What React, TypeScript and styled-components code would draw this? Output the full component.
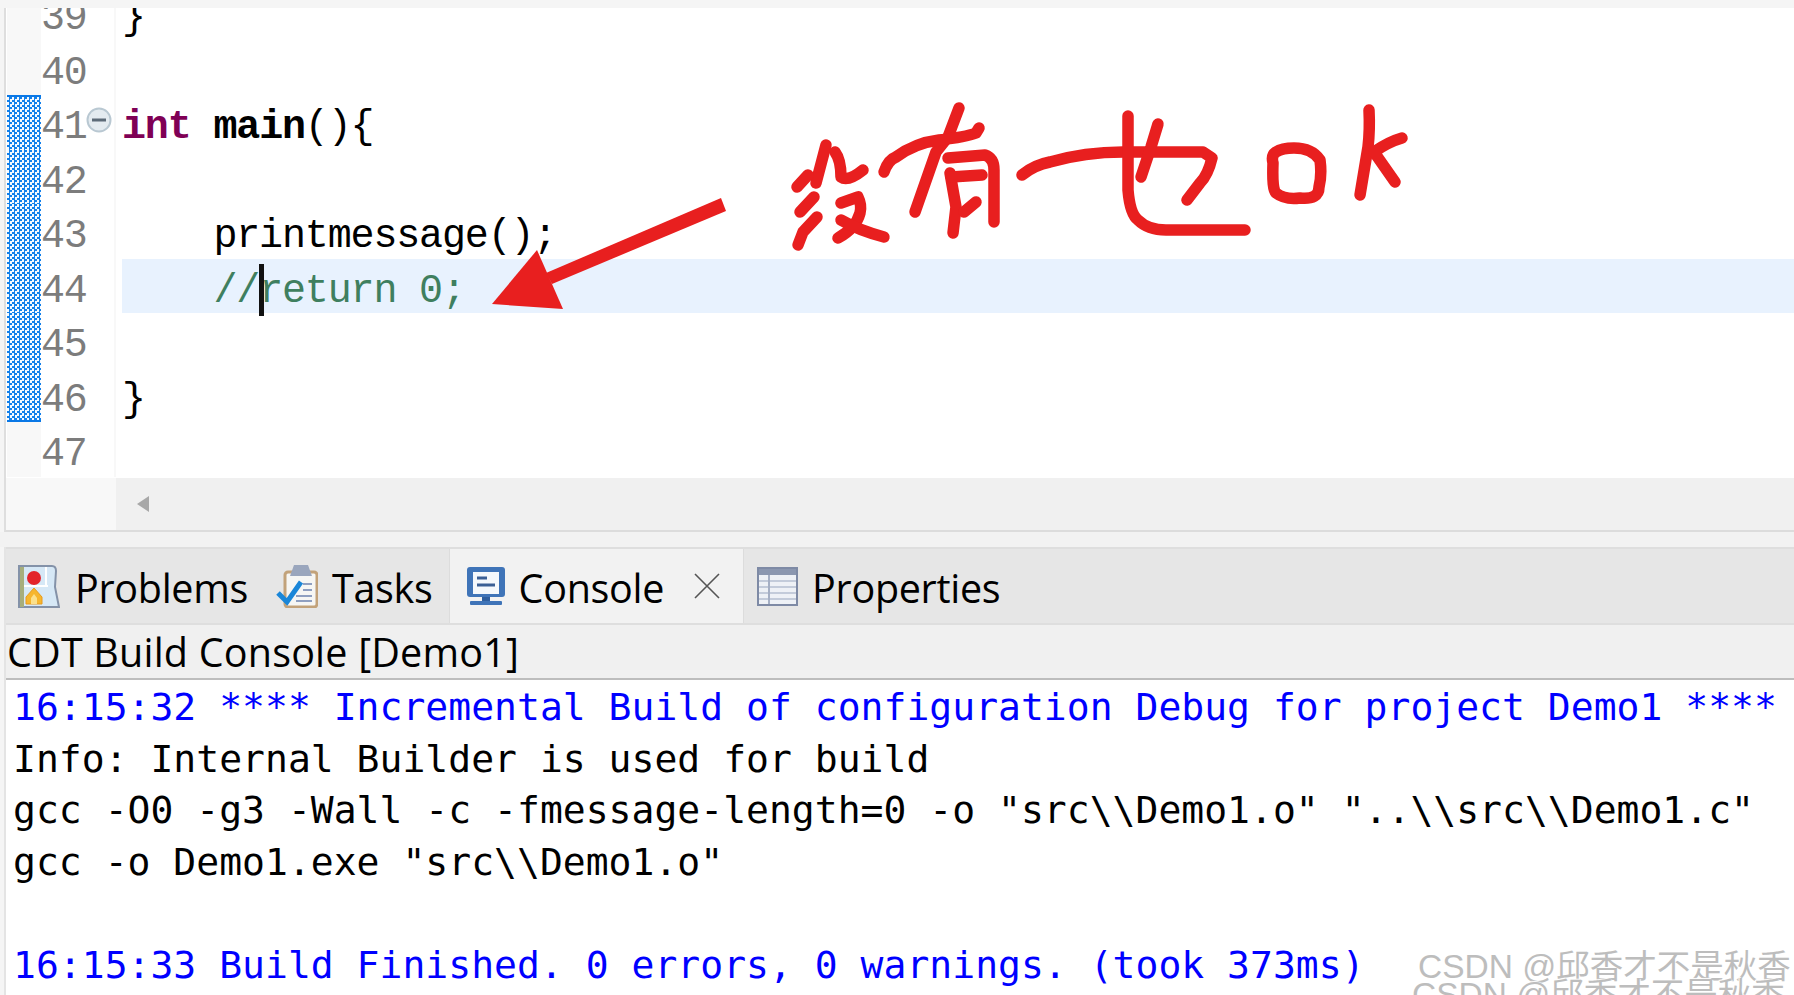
import React from "react";
import styled, { createGlobalStyle } from "styled-components";

const GlobalStyle = createGlobalStyle`
  html, body { margin: 0; padding: 0; background: #f5f5f5; }
  #root { width: 1794px; height: 995px; overflow: hidden; }
`;

const Page = styled.div`
  position: relative;
  display: flex;
  flex-direction: column;
  width: 1794px;
  height: 995px;
  overflow: hidden;
  background: #f5f5f5;
`;

const TopStrip = styled.div`
  flex: none;
  height: 8px;
  position: relative;
  z-index: 1;
  background: #f5f5f5;
`;

const Editor = styled.div`
  flex: none;
  height: 524px;
  margin-left: 4px;
  display: flex;
  flex-direction: column;
  overflow: hidden;
  background: #fff;
  border-left: 2px solid #dedede;
  border-bottom: 2px solid #dcdcdc;
  box-sizing: border-box;
`;

const Rows = styled.div`
  flex: none;
  margin-top: -22px;
`;

const Row = styled.div`
  display: flex;
  height: 54.5px;
`;

const Ruler = styled.div<{ $marked?: boolean; $first?: boolean; $last?: boolean }>`
  flex: none;
  width: 34px;
  margin-left: 1px;
  box-sizing: border-box;
  background: ${(p) =>
    p.$marked ? "repeating-conic-gradient(#1280ea 0 25%, #f4f9ff 0 50%) 0 0 / 5px 5px" : "#f8f8f8"};
  border-top: ${(p) => (p.$first ? "2px solid #0a78e6" : "none")};
  border-bottom: ${(p) => (p.$last ? "2px solid #0a78e6" : "none")};
`;

const LineNo = styled.div`
  position: relative;
  flex: none;
  width: 73px;
  margin-left: 0;
  border-right: 2px solid #f8f8f8;
  font: 40px/65px "Liberation Mono", monospace;
  letter-spacing: -1.2px;
  color: #7c7c7c;
`;

const FoldIcon = styled.svg`
  position: absolute;
  left: 45px;
  top: 12px;
`;

const Code = styled.div<{ $current?: boolean }>`
  position: relative;
  flex: 1;
  margin-left: 6px;
  white-space: pre;
  font: 40px/65px "Liberation Mono", monospace;
  letter-spacing: -1.15px;
  color: #000;
  background: ${(p) => (p.$current ? "#e8f2fe" : "transparent")};
`;

const Keyword = styled.span`
  color: #7f0055;
  font-weight: 700;
`;

const Bold = styled.span`
  font-weight: 700;
`;

const Comment = styled.span`
  color: #3f7f5f;
`;

const Caret = styled.span`
  display: inline-block;
  position: relative;
  width: 0;
  height: 0;
  &::after {
    content: "";
    position: absolute;
    left: 0;
    top: -38px;
    width: 5px;
    height: 52px;
    background: #111;
  }
`;

const ScrollRow = styled.div`
  flex: 1;
  display: flex;
  margin-top: 1px;
`;

const ScrollCorner = styled.div`
  flex: none;
  width: 110px;
  background: #f8f8f8;
`;

const ScrollTrack = styled.div`
  flex: 1;
  display: flex;
  align-items: center;
  padding-left: 20px;
  background: #f0f0f0;
`;

const Gap = styled.div`
  flex: none;
  height: 15px;
  background: #f2f2f2;
`;

const Panel = styled.div`
  flex: 1;
  min-height: 0;
  margin-left: 4px;
  display: flex;
  flex-direction: column;
  border-left: 2px solid #e4e4e4;
  background: #fff;
`;

const TabBar = styled.div`
  flex: none;
  height: 78px;
  box-sizing: border-box;
  display: flex;
  align-items: stretch;
  background: #e6e6e6;
  border-top: 2px solid #dedede;
  border-bottom: 2px solid #dedede;
`;

const Tab = styled.div<{ $active?: boolean; $left: number; $right: number; $gap: number }>`
  display: flex;
  align-items: center;
  gap: ${(p) => p.$gap}px;
  padding: 0 ${(p) => p.$right}px 0 ${(p) => p.$left}px;
  background: ${(p) => (p.$active ? "#f2f2f2" : "transparent")};
  border-left: ${(p) => (p.$active ? "1px solid #dcdcdc" : "none")};
  border-right: ${(p) => (p.$active ? "1px solid #dcdcdc" : "none")};
`;

const TabLabel = styled.span`
  padding-top: 6px;
  font: 39.5px/1 "Open Sans", "Noto Sans", sans-serif;
  letter-spacing: -0.3px;
  color: #000;
`;

const CloseX = styled.svg`
  margin-left: 16px;
`;

const ConsoleTitle = styled.div`
  flex: none;
  height: 55px;
  box-sizing: border-box;
  padding-left: 1px;
  background: #f0f0f0;
  border-bottom: 2px solid #bdbdbd;
  font: 39.5px/55px "Open Sans", "Noto Sans", sans-serif;
  letter-spacing: 0.2px;
  color: #000;
  white-space: nowrap;
`;

const ConsoleBody = styled.div`
  flex: 1;
  padding: 2px 0 0 7px;
  overflow: hidden;
`;

const ConsoleLine = styled.div<{ $info?: boolean }>`
  height: 51.5px;
  white-space: pre;
  font: 38px/51.5px "DejaVu Sans Mono", monospace;
  letter-spacing: 0.03px;
  color: ${(p) => (p.$info ? "#0000ff" : "#000")};
`;

const Watermark = styled.div<{ $left: number; $top: number }>`
  position: absolute;
  left: ${(p) => p.$left}px;
  top: ${(p) => p.$top}px;
  white-space: nowrap;
  font: 33.5px/40px "Liberation Sans", "Noto Sans CJK SC", sans-serif;
  color: #bdbdbd;
  text-shadow: 1px 1px 1px #fff, -1px -1px 1px #fff;
`;

const Scribble = styled.svg`
  position: absolute;
  left: 0;
  top: 0;
  pointer-events: none;
`;

const FoldGlyph = () => (
  <FoldIcon width="26" height="26" viewBox="0 0 26 26">
    <circle cx="13" cy="13" r="11.5" fill="#e4ebf0" stroke="#b9c8d2" strokeWidth="2" />
    <rect x="6" y="11.5" width="14" height="3" fill="#5d6b78" />
  </FoldIcon>
);

const ProblemsIcon = () => (
  <svg width="42" height="43" viewBox="0 0 42 43">
    <path d="M1 1H34Q38 1 38 6L37 22L41 42H1Z" fill="#d6e8f6" stroke="#8492a8" strokeWidth="2" />
    <path d="M2 21H30M28 2V22" stroke="#fff" strokeWidth="2" />
    <path d="M2 2H6V42H2Z" fill="#a7ae7c" />
    <circle cx="16" cy="13" r="7" fill="#e3242b" />
    <path d="M8 39V32L16 23L24 32V39Z" fill="#f6b62e" stroke="#e89a1c" />
    <path d="M13 39V33L16 29L19 33V39Z" fill="#fbe08c" />
  </svg>
);

const TasksIcon = () => (
  <svg width="42" height="43" viewBox="0 0 42 43">
    <rect x="9" y="7" width="32" height="35" rx="3" fill="#f6f6f4" stroke="#c2a27a" strokeWidth="3" />
    <path d="M18 0H32L36 11H14Z" fill="#9aa6bd" />
    <path d="M27 19H36M27 25H36M20 31H36M20 36H36" stroke="#8f9fc0" strokeWidth="2" />
    <path d="M2 28L11 37L25 17" fill="none" stroke="#1a86d8" strokeWidth="5" />
  </svg>
);

const ConsoleIcon = () => (
  <svg width="38" height="39" viewBox="0 0 38 39">
    <rect x="0" y="0" width="38" height="30" rx="3" fill="#3f74b8" />
    <rect x="6" y="5" width="26" height="22" fill="#f4f8fc" />
    <path d="M10 11H20M10 18H28" stroke="#3a5f95" strokeWidth="3" />
    <rect x="15" y="30" width="8" height="4" fill="#2f5f9f" />
    <rect x="3" y="34" width="32" height="4" rx="1" fill="#3f74b8" />
  </svg>
);

const PropertiesIcon = () => (
  <svg width="41" height="39" viewBox="0 0 41 39">
    <rect x="1" y="1" width="39" height="37" fill="#eef1f6" stroke="#7e8aa5" strokeWidth="2" />
    <rect x="2" y="2" width="37" height="6" fill="#8b97b0" />
    <path d="M2 14H39M2 20H39M2 26H39M2 32H39" stroke="#c3cbda" strokeWidth="2" />
    <path d="M12 8V37" stroke="#a5afc4" strokeWidth="2" />
  </svg>
);

const RED = "#e81f1f";

const strokes = [
  // 没
  "M826 145L816 183",
  "M835 152Q841 160 841 177Q848 182 863 170",
  "M808 175L797 187",
  "M814 197L800 212",
  "M817 217L803 232L798 245",
  "M841 203L858 197Q862 205 860 213Q856 228 838 238",
  "M841 220Q858 230 884 237",
  // 有
  "M959 108L948 137L936 152L915 212",
  "M884 172Q888 160 896 157Q915 143 939 140Q966 137 976 133L979 128",
  "M950 173L956 207L953 233",
  "M948 158L985 155Q994 158 994 170V222",
  "M951 177L982 175",
  "M964 212L976 202",
  // 也
  "M1022 175Q1034 165 1050 162Q1085 152 1123 152H1203L1212 158Q1208 175 1200 183L1187 200",
  "M1128 116V190Q1130 214 1138 220Q1148 230 1166 230H1245",
  "M1158 124L1151 147L1141 177",
  // ok
  "M1276 152Q1271 155 1273 163Q1272 190 1276 193Q1285 200 1300 198Q1319 200 1319 187Q1322 175 1320 160Q1312 148 1294 148Q1282 148 1276 152Z",
  "M1369 110Q1370 130 1368 147L1360 195",
  "M1402 138Q1388 142 1374 152L1395 182",
];

const Annotation = () => (
  <Scribble width="1794" height="995" viewBox="0 0 1794 995">
    <path d="M721 198L726 211L552 284L546 273Z" fill={RED} />
    <path d="M537 250L563 309L492 304Z" fill={RED} />
    {strokes.map((d) => (
      <path
        key={d}
        d={d}
        fill="none"
        stroke={RED}
        strokeWidth="11.5"
        strokeLinecap="round"
        strokeLinejoin="round"
      />
    ))}
  </Scribble>
);

type Line = { no: number; code?: React.ReactNode; current?: boolean };

const LINES: Line[] = [
  { no: 39, code: "}" },
  { no: 40 },
  {
    no: 41,
    code: (
      <>
        <Keyword>int</Keyword> <Bold>main</Bold>(){"{"}
      </>
    ),
  },
  { no: 42 },
  { no: 43, code: "    printmessage();" },
  {
    no: 44,
    current: true,
    code: (
      <Comment>
        {"    //"}
        <Caret />
        {"return 0;"}
      </Comment>
    ),
  },
  { no: 45 },
  { no: 46, code: "}" },
  { no: 47 },
];

const CONSOLE: { text: string; info?: boolean }[] = [
  { text: "16:15:32 **** Incremental Build of configuration Debug for project Demo1 ****", info: true },
  { text: "Info: Internal Builder is used for build" },
  { text: 'gcc -O0 -g3 -Wall -c -fmessage-length=0 -o "src\\\\Demo1.o" "..\\\\src\\\\Demo1.c"' },
  { text: 'gcc -o Demo1.exe "src\\\\Demo1.o"' },
  { text: "" },
  { text: "16:15:33 Build Finished. 0 errors, 0 warnings. (took 373ms)", info: true },
];

export default function App() {
  return (
    <Page>
      <GlobalStyle />
      <TopStrip />
      <Editor>
        <Rows>
          {LINES.map((l) => (
            <Row key={l.no}>
              <Ruler $marked={l.no >= 41 && l.no <= 46} $first={l.no === 41} $last={l.no === 46} />
              <LineNo>
                {l.no}
                {l.no === 41 && <FoldGlyph />}
              </LineNo>
              <Code $current={l.current}>{l.code}</Code>
            </Row>
          ))}
        </Rows>
        <ScrollRow>
          <ScrollCorner />
          <ScrollTrack>
            <svg width="14" height="18" viewBox="0 0 14 18">
              <path d="M13 1V17L1 9Z" fill="#a8a8a8" />
            </svg>
          </ScrollTrack>
        </ScrollRow>
      </Editor>
      <Gap />
      <Panel>
        <TabBar>
          <Tab $left={12} $right={28} $gap={15}>
            <ProblemsIcon />
            <TabLabel>Problems</TabLabel>
          </Tab>
          <Tab $left={0} $right={16} $gap={14}>
            <TasksIcon />
            <TabLabel>Tasks</TabLabel>
          </Tab>
          <Tab $active $left={17} $right={23} $gap={14}>
            <ConsoleIcon />
            <TabLabel>Console</TabLabel>
            <CloseX width="26" height="26" viewBox="0 0 26 26">
              <path d="M1 1L25 25M25 1L1 25" stroke="#555" strokeWidth="1.6" />
            </CloseX>
          </Tab>
          <Tab $left={13} $right={0} $gap={14}>
            <PropertiesIcon />
            <TabLabel>Properties</TabLabel>
          </Tab>
        </TabBar>
        <ConsoleTitle>CDT Build Console [Demo1]</ConsoleTitle>
        <ConsoleBody>
          {CONSOLE.map((c, i) => (
            <ConsoleLine key={i} $info={c.info}>
              {c.text}
            </ConsoleLine>
          ))}
        </ConsoleBody>
      </Panel>
      <Annotation />
      <Watermark $left={1418} $top={947}>CSDN @邱香才不是秋香</Watermark>
      <Watermark $left={1412} $top={975}>CSDN @邱香才不是秋香</Watermark>
    </Page>
  );
}
